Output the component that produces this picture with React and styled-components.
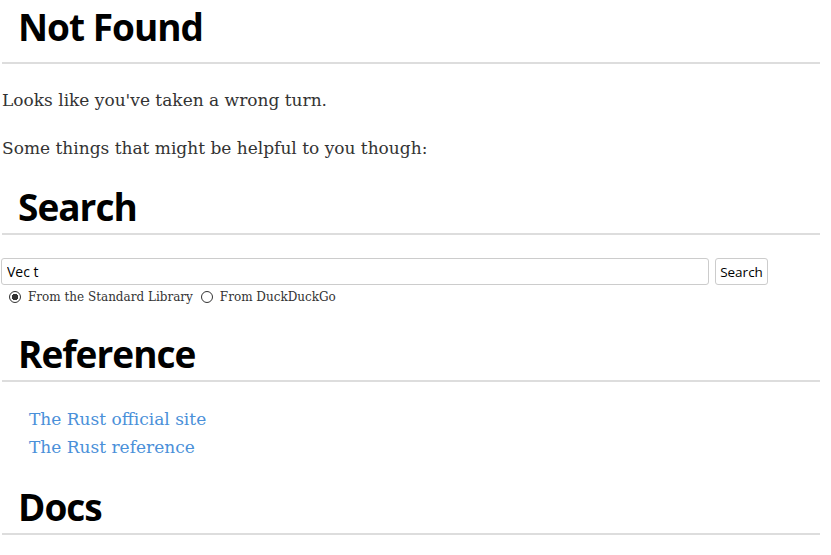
import React from "react";
import styled, { createGlobalStyle } from "styled-components";

const Global = createGlobalStyle`
  html, body { margin: 0; padding: 0; background: #fff; }
  body { font-family: "DejaVu Serif", serif; color: #333; }
  * { box-sizing: border-box; }
`;

const Page = styled.main`
  margin: 0 11px 0 2px;
  padding-bottom: 40px;
`;

const Heading = styled.h2`
  font-family: "Open Sans", "Noto Sans", sans-serif;
  font-weight: 700;
  font-size: 37px;
  line-height: 46px;
  letter-spacing: -1px;
  color: #000;
  margin: ${(p) => (p.$first ? "4px 0 0" : "24px 0 0")};
  padding: 0 0 ${(p) => (p.$first ? "12px" : "3px")} 16px;
  border-bottom: 2px solid #dddddd;
`;

const Para = styled.p`
  font-size: 17px;
  line-height: 24px;
  margin: 24px 0;
  color: #333;
`;

const SearchForm = styled.form`
  margin-top: 23px;
  display: flex;
  flex-direction: column;
`;

const SearchRow = styled.div`
  display: flex;
  align-items: center;
  gap: 6px;
`;

const SearchInput = styled.input`
  width: 708px;
  height: 27px;
  margin: 0 0 0 -1px;
  padding: 0 5px;
  border: 1px solid #cccccc;
  border-radius: 3px;
  font-family: "Open Sans", "Noto Sans", sans-serif;
  font-size: 14px;
  color: #000;
  background: #fff;
  outline: none;
`;

const SearchButton = styled.button`
  height: 27px;
  width: 53px;
  padding: 0;
  border: 1px solid #cccccc;
  border-radius: 3px;
  background: #fff;
  font-family: "Open Sans", "Noto Sans", sans-serif;
  font-size: 13.5px;
  color: #000;
`;

const RadioRow = styled.div`
  display: flex;
  align-items: center;
  height: 22px;
  padding: 1px 0 0 7px;
`;

const Radio = styled.input.attrs({ type: "radio" })`
  appearance: none;
  width: 12px;
  height: 12px;
  margin: 0 7px 0 0;
  border: 1px solid #333;
  border-radius: 50%;
  background: #fff;
  &:checked {
    background: radial-gradient(circle, #333 0 3px, #fff 3.5px);
  }
`;

const RadioLabel = styled.label`
  display: flex;
  align-items: center;
  font-size: 12px;
  color: #333;
  margin-right: 8px;
`;

const LinkList = styled.ul`
  list-style: none;
  margin: 23px 0 -1px;
  padding: 0 0 0 27px;
`;

const LinkItem = styled.li`
  font-size: 17px;
  line-height: 28px;
`;

const Link = styled.a`
  color: #4a90d9;
  text-decoration: none;
`;

export default function App() {
  return (
    <>
      <Global />
      <Page>
        <Heading as="h1" $first>Not Found</Heading>
        <Para>Looks like you've taken a wrong turn.</Para>
        <Para>Some things that might be helpful to you though:</Para>

        <Heading>Search</Heading>
        <SearchForm onSubmit={(e) => e.preventDefault()}>
          <SearchRow>
            <SearchInput type="text" defaultValue="Vec t" />
            <SearchButton type="submit">Search</SearchButton>
          </SearchRow>
          <RadioRow>
            <RadioLabel>
              <Radio name="src" defaultChecked />
              From the Standard Library
            </RadioLabel>
            <RadioLabel>
              <Radio name="src" />
              From DuckDuckGo
            </RadioLabel>
          </RadioRow>
        </SearchForm>

        <Heading>Reference</Heading>
        <LinkList>
          <LinkItem><Link href="#">The Rust official site</Link></LinkItem>
          <LinkItem><Link href="#">The Rust reference</Link></LinkItem>
        </LinkList>

        <Heading>Docs</Heading>
      </Page>
    </>
  );
}
